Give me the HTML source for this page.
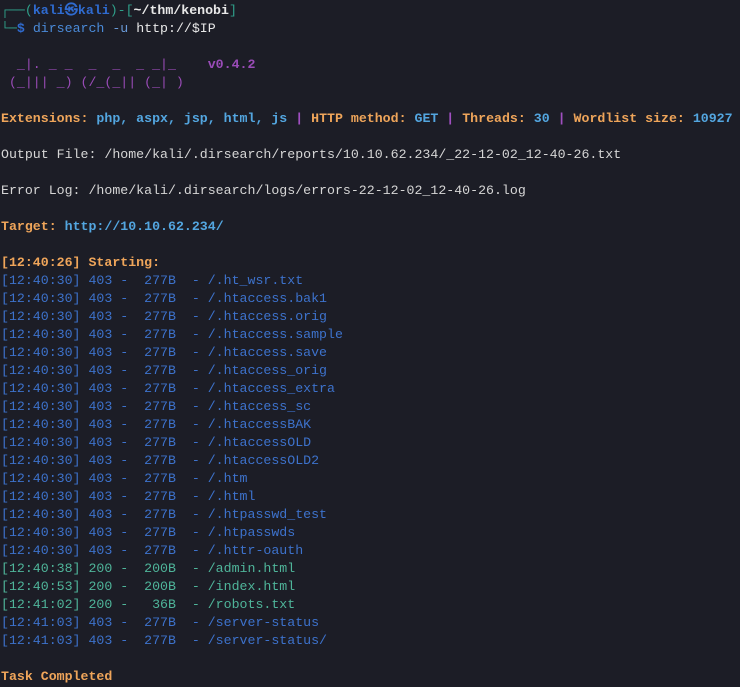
<!DOCTYPE html>
<html><head><meta charset="utf-8"><style>
html,body{margin:0;padding:0;background:#1c1d26;width:740px;height:687px;overflow:hidden}
pre{margin:0;padding:2px 0 0 1px;font-family:"Liberation Mono","DejaVu Sans Mono",monospace;font-size:13.25px;line-height:18px;color:#d6d6d6;white-space:pre}
.o{color:#efa55a;font-weight:bold}.c{color:#53a6e0;font-weight:bold}.p{color:#a04fc0;font-weight:bold}
.b{color:#3d72cc}.g{color:#4fb59a}.m{color:#9a4cb8}.w{color:#e8e8e8;font-weight:bold}
.k{color:#2f6bd0;font-weight:bold}.t{color:#2fa08a}.d{color:#4a8ad8}
</style></head><body><pre><span class="t">┌──(</span><span class="k">kali㉿kali</span><span class="t">)-[</span><span class="w">~/thm/kenobi</span><span class="t">]</span>
<span class="t">└─</span><span class="k">$</span> <span class="d">dirsearch</span> <span style="color:#6a9ad8">-u</span> <span style="color:#e8e8e8">http://$IP</span>

<span class="m">  _|. _ _  _  _  _ _|_    <b>v0.4.2</b></span>
<span class="m"> (_||| _) (/_(_|| (_| )</span>

<span class="o">Extensions: </span><span class="c">php, aspx, jsp, html, js</span><span class="p"> | </span><span class="o">HTTP method: </span><span class="c">GET</span><span class="p"> | </span><span class="o">Threads: </span><span class="c">30</span><span class="p"> | </span><span class="o">Wordlist size: </span><span class="c">10927</span>

Output File: /home/kali/.dirsearch/reports/10.10.62.234/_22-12-02_12-40-26.txt

Error Log: /home/kali/.dirsearch/logs/errors-22-12-02_12-40-26.log

<span class="o">Target: </span><span class="c">http://10.10.62.234/</span>

<span class="o">[12:40:26] Starting:</span>
<span class="b">[12:40:30] 403 -  277B  - /.ht_wsr.txt
[12:40:30] 403 -  277B  - /.htaccess.bak1
[12:40:30] 403 -  277B  - /.htaccess.orig
[12:40:30] 403 -  277B  - /.htaccess.sample
[12:40:30] 403 -  277B  - /.htaccess.save
[12:40:30] 403 -  277B  - /.htaccess_orig
[12:40:30] 403 -  277B  - /.htaccess_extra
[12:40:30] 403 -  277B  - /.htaccess_sc
[12:40:30] 403 -  277B  - /.htaccessBAK
[12:40:30] 403 -  277B  - /.htaccessOLD
[12:40:30] 403 -  277B  - /.htaccessOLD2
[12:40:30] 403 -  277B  - /.htm
[12:40:30] 403 -  277B  - /.html
[12:40:30] 403 -  277B  - /.htpasswd_test
[12:40:30] 403 -  277B  - /.htpasswds
[12:40:30] 403 -  277B  - /.httr-oauth</span>
<span class="g">[12:40:38] 200 -  200B  - /admin.html
[12:40:53] 200 -  200B  - /index.html
[12:41:02] 200 -   36B  - /robots.txt</span>
<span class="b">[12:41:03] 403 -  277B  - /server-status
[12:41:03] 403 -  277B  - /server-status/</span>

<span class="o">Task Completed</span></pre></body></html>
